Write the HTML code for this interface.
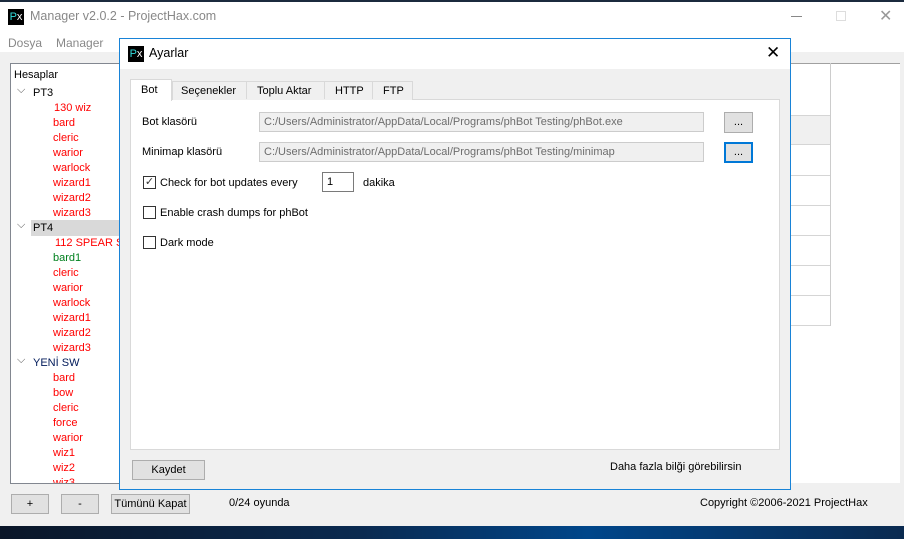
<!DOCTYPE html>
<html><head><meta charset="utf-8"><style>
*{margin:0;padding:0;box-sizing:border-box}
body{width:904px;height:539px;position:relative;overflow:hidden;background:#f0f0f0;font-family:"Liberation Sans",sans-serif;font-size:11px;color:#000}
.a{position:absolute;white-space:nowrap}
.btn{position:absolute;background:#e1e1e1;border:1px solid #adadad;text-align:center;white-space:nowrap}
.r{color:#f00}.g{color:#00801e}
</style></head><body>
<div class="a" style="left:0;top:0;width:904px;height:2px;background:#1b2a3d"></div>
<div class="a" style="left:0;top:2px;width:904px;height:50px;background:#fff"></div>
<div class="a" style="left:8px;top:9px;width:16px;height:16px;background:#000;color:#3dd;font-size:11px;line-height:16px;text-align:center">P<span style="color:#fff">x</span></div>
<div class="a" style="left:30px;top:9px;font-size:12.5px;color:#888">Manager v2.0.2 - ProjectHax.com</div>
<div class="a" style="left:791px;top:16px;width:11px;height:1px;background:#888"></div>
<div class="a" style="left:836px;top:11px;width:10px;height:10px;border:1px solid #ddd"></div>
<div class="a" style="left:879px;top:6px;font-size:16px;color:#999">✕</div>
<div class="a" style="left:8px;top:36px;font-size:12px;color:#888">Dosya</div>
<div class="a" style="left:56px;top:36px;font-size:12px;color:#888">Manager</div>

<div class="a" style="left:10px;top:63px;width:112px;height:421px;background:#fff;border:1px solid #828790;overflow:hidden;line-height:15px">
<div class="a" style="left:3px;top:4px">Hesaplar</div>
<div class="a" style="left:6px;top:19px;color:#555">⌵</div><div class="a" style="left:22px;top:22px">PT3</div>
<div class="a r" style="left:43px;top:37px">130 wiz</div>
<div class="a r" style="left:42px;top:52px">bard</div>
<div class="a r" style="left:42px;top:67px">cleric</div>
<div class="a r" style="left:42px;top:82px">warior</div>
<div class="a r" style="left:42px;top:97px">warlock</div>
<div class="a r" style="left:42px;top:112px">wizard1</div>
<div class="a r" style="left:42px;top:127px">wizard2</div>
<div class="a r" style="left:42px;top:142px">wizard3</div>
<div class="a" style="left:20px;top:156px;width:100px;height:16px;background:#d9d9d9"></div>
<div class="a" style="left:6px;top:154px;color:#555">⌵</div><div class="a" style="left:22px;top:157px">PT4</div>
<div class="a r" style="left:44px;top:172px">112 SPEAR SB</div>
<div class="a g" style="left:42px;top:187px">bard1</div>
<div class="a r" style="left:42px;top:202px">cleric</div>
<div class="a r" style="left:42px;top:217px">warior</div>
<div class="a r" style="left:42px;top:232px">warlock</div>
<div class="a r" style="left:42px;top:247px">wizard1</div>
<div class="a r" style="left:42px;top:262px">wizard2</div>
<div class="a r" style="left:42px;top:277px">wizard3</div>
<div class="a" style="left:6px;top:289px;color:#555">⌵</div><div class="a" style="left:22px;top:292px;color:#001a5a">YENİ SW</div>
<div class="a r" style="left:42px;top:307px">bard</div>
<div class="a r" style="left:42px;top:322px">bow</div>
<div class="a r" style="left:42px;top:337px">cleric</div>
<div class="a r" style="left:42px;top:352px">force</div>
<div class="a r" style="left:42px;top:367px">warior</div>
<div class="a r" style="left:42px;top:382px">wiz1</div>
<div class="a r" style="left:42px;top:397px">wiz2</div>
<div class="a r" style="left:42px;top:412px">wiz3</div>
</div>

<div class="a" style="left:790px;top:63px;width:110px;height:420px;background:#fff;border-top:1px solid #a0a0a0"></div>
<div class="a" style="left:790px;top:63px;width:41px;height:263px;border-right:1px solid #ccc"></div>
<div class="a" style="left:790px;top:115px;width:40px;height:30px;background:#f0f0f0;border-bottom:1px solid #d5d5d5;border-top:1px solid #d5d5d5"></div>
<div class="a" style="left:790px;top:175px;width:40px;height:1px;background:#d5d5d5"></div>
<div class="a" style="left:790px;top:205px;width:40px;height:1px;background:#d5d5d5"></div>
<div class="a" style="left:790px;top:235px;width:40px;height:1px;background:#d5d5d5"></div>
<div class="a" style="left:790px;top:265px;width:40px;height:1px;background:#d5d5d5"></div>
<div class="a" style="left:790px;top:295px;width:40px;height:1px;background:#d5d5d5"></div>
<div class="a" style="left:790px;top:325px;width:40px;height:1px;background:#d5d5d5"></div>

<div class="btn" style="left:11px;top:494px;width:38px;height:20px;line-height:18px">+</div>
<div class="btn" style="left:61px;top:494px;width:38px;height:20px;line-height:18px">-</div>
<div class="btn" style="left:111px;top:494px;width:79px;height:20px;line-height:18px">Tümünü Kapat</div>
<div class="a" style="left:229px;top:497px">0/24 oyunda</div>
<div class="a" style="left:700px;top:497px">Copyright ©2006-2021 ProjectHax</div>
<div class="a" style="left:0;top:526px;width:904px;height:13px;background:linear-gradient(90deg,#0a1628,#0a2a50 40%,#00468a 65%,#0a2a50)"></div>

<div class="a" style="left:119px;top:38px;width:672px;height:452px;background:#f0f0f0;border:1px solid #1883d7">
<div class="a" style="left:0;top:0;width:670px;height:30px;background:#fff"></div>
<div class="a" style="left:8px;top:7px;width:16px;height:16px;background:#000;color:#3dd;font-size:11px;line-height:16px;text-align:center">P<span style="color:#fff">x</span></div>
<div class="a" style="left:29px;top:7px;font-size:12.5px">Ayarlar</div>
<div class="a" style="left:646px;top:4px;font-size:17px">✕</div>
<div class="a" style="left:10px;top:60px;width:650px;height:351px;background:#fff;border:1px solid #d9d9d9"></div>
<div class="a" style="left:52px;top:42px;width:241px;height:19px;border:1px solid #d9d9d9;border-bottom:none;background:#f0f0f0"></div>
<div class="a" style="left:126px;top:42px;width:1px;height:18px;background:#d9d9d9"></div>
<div class="a" style="left:204px;top:42px;width:1px;height:18px;background:#d9d9d9"></div>
<div class="a" style="left:252px;top:42px;width:1px;height:18px;background:#d9d9d9"></div>
<div class="a" style="left:10px;top:40px;width:42px;height:22px;background:#fff;border:1px solid #d9d9d9;border-bottom:none"></div>
<div class="a" style="left:21px;top:45px">Bot</div>
<div class="a" style="left:61px;top:46px">Seçenekler</div>
<div class="a" style="left:137px;top:46px">Toplu Aktar</div>
<div class="a" style="left:215px;top:46px">HTTP</div>
<div class="a" style="left:263px;top:46px">FTP</div>
<div class="a" style="left:22px;top:77px">Bot klasörü</div>
<div class="a" style="left:139px;top:73px;width:445px;height:20px;background:#f0f0f0;border:1px solid #ccc;color:#6d6d6d;padding:3px 4px">C:/Users/Administrator/AppData/Local/Programs/phBot Testing/phBot.exe</div>
<div class="btn" style="left:604px;top:73px;width:29px;height:21px;line-height:19px">...</div>
<div class="a" style="left:22px;top:107px">Minimap klasörü</div>
<div class="a" style="left:139px;top:103px;width:445px;height:20px;background:#f0f0f0;border:1px solid #ccc;color:#6d6d6d;padding:3px 4px">C:/Users/Administrator/AppData/Local/Programs/phBot Testing/minimap</div>
<div class="btn" style="left:604px;top:103px;width:29px;height:21px;line-height:17px;border:2px solid #0078d7">...</div>
<div class="a" style="left:23px;top:137px;width:13px;height:13px;border:1px solid #333;font-size:11px;line-height:11px;text-align:center;color:#333">✓</div>
<div class="a" style="left:40px;top:138px">Check for bot updates every</div>
<div class="a" style="left:202px;top:133px;width:32px;height:20px;background:#fff;border:1px solid #7a7a7a;padding:3px 4px">1</div>
<div class="a" style="left:243px;top:138px">dakika</div>
<div class="a" style="left:23px;top:167px;width:13px;height:13px;border:1px solid #333"></div>
<div class="a" style="left:40px;top:168px">Enable crash dumps for phBot</div>
<div class="a" style="left:23px;top:197px;width:13px;height:13px;border:1px solid #333"></div>
<div class="a" style="left:40px;top:198px">Dark mode</div>
<div class="btn" style="left:12px;top:421px;width:73px;height:20px;line-height:18px">Kaydet</div>
<div class="a" style="left:490px;top:422px">Daha fazla bilği görebilirsin</div>
</div>
</body></html>
